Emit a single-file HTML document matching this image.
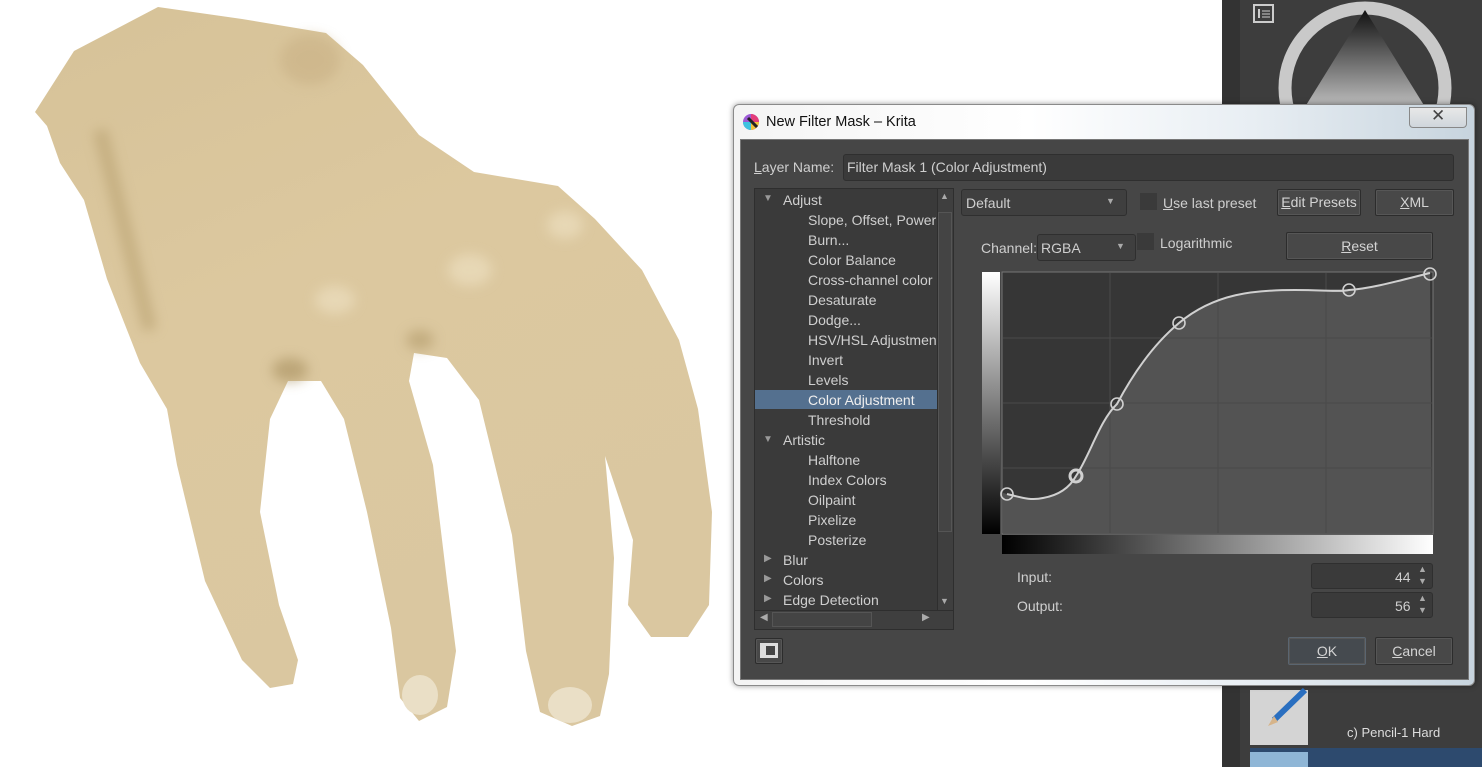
<!DOCTYPE html>
<html><head><meta charset="utf-8"><style>
*{margin:0;padding:0;box-sizing:border-box}
body{width:1482px;height:767px;position:relative;overflow:hidden;background:#fff;font-family:"Liberation Sans","DejaVu Sans",sans-serif;font-size:14px;color:#d4d4d4}
.a{position:absolute}
.t{position:absolute;white-space:nowrap;font-size:14px;color:#cfcfcf}
.btn{position:absolute;background:#484848;border:1px solid #2c2c2c;box-shadow:inset 0 0 0 1px #565656;color:#d4d4d4;text-align:center;font-size:14px;border-radius:2px}
.fld{position:absolute;background:#3a3a3a;border:1px solid #2f2f2f;border-radius:3px}
u{text-decoration:underline}
</style></head><body>
<!-- hand -->
<svg class="a" style="left:0;top:0" width="720" height="767">
<defs>
<linearGradient id="h" x1="0" y1="0" x2="0.4" y2="1"><stop offset="0" stop-color="#d6c298"/><stop offset="0.45" stop-color="#dcc89f"/><stop offset="1" stop-color="#dac7a0"/></linearGradient>
<filter id="bl"><feGaussianBlur stdDeviation="6"/></filter>
</defs>
<path fill="url(#h)" d="M35 112 L74 51 L158 7 L242 19 L326 33 L363 65 L419 135 L474 172 L558 186 L595 219 L642 270 L679 340 L698 409 L712 512 L709 605 L688 637 L651 637 L628 605 L633 540 L605 456 L614 558 L609 674 L600 716 L572 726 L540 712 L526 651 L512 535 L479 400 L447 358 L414 353 L409 381 L433 465 L447 581 L456 651 L447 707 L419 721 L400 698 L391 628 L367 512 L344 419 L321 381 L288 381 L270 419 L260 512 L279 605 L298 660 L293 684 L270 688 L242 660 L205 581 L177 465 L167 409 L140 363 L107 279 L84 200 L60 163 L47 126 Z"/>
<g filter="url(#bl)" opacity="0.6">
<ellipse cx="335" cy="300" rx="20" ry="14" fill="#efe2c4"/>
<ellipse cx="470" cy="270" rx="22" ry="16" fill="#efe2c4"/>
<ellipse cx="565" cy="225" rx="18" ry="14" fill="#efe2c4"/>
<ellipse cx="290" cy="370" rx="18" ry="12" fill="#a8905f"/>
<ellipse cx="420" cy="340" rx="14" ry="10" fill="#b39b6a"/>
<path d="M100 130 L150 330" stroke="#b8a070" stroke-width="14" fill="none"/>
<ellipse cx="310" cy="60" rx="30" ry="25" fill="#c9b185"/>
</g>
<ellipse cx="420" cy="695" rx="18" ry="20" fill="#eadfc6"/>
<ellipse cx="570" cy="705" rx="22" ry="18" fill="#eadfc6"/>
</svg>
<!-- right panel -->
<div class="a" style="left:1222px;top:0;width:260px;height:767px;background:#3d3d3d"></div>
<div class="a" style="left:1222px;top:0;width:18px;height:767px;background:#333"></div>
<svg class="a" style="left:1240px;top:0" width="242" height="767">
<defs><linearGradient id="tr" x1="0" y1="0" x2="0" y2="1"><stop offset="0" stop-color="#111"/><stop offset="1" stop-color="#ccc"/></linearGradient></defs>
<circle cx="125" cy="88" r="80" fill="none" stroke="#c9c9c9" stroke-width="13"/>
<polygon points="125,10 60,115 190,115" fill="url(#tr)"/>
<rect x="14" y="5" width="19" height="17" fill="none" stroke="#ccc" stroke-width="2"/>
<line x1="19" y1="9" x2="19" y2="18" stroke="#ccc" stroke-width="2"/>
<line x1="22" y1="11" x2="30" y2="11" stroke="#ccc"/><line x1="22" y1="14" x2="30" y2="14" stroke="#ccc"/><line x1="22" y1="17" x2="30" y2="17" stroke="#ccc"/>
<rect x="10" y="690" width="58" height="55" fill="#d4d4d4"/>
<line x1="34" y1="720" x2="65" y2="690" stroke="#2a6fc0" stroke-width="6"/>
<polygon points="28,726 34,716 38,722" fill="#d6b48a"/>
<rect x="10" y="748" width="232" height="19" fill="#2d4a6e"/>
<rect x="10" y="752" width="58" height="15" fill="#8fb6d6"/>
<text x="107" y="737" fill="#ddd" font-size="13" font-family="Liberation Sans">c) Pencil-1 Hard</text>
</svg>
<!-- dialog frame -->
<div class="a" style="left:733px;top:104px;width:742px;height:582px;background:linear-gradient(90deg,#f4f4f4,#fff 40%,#e8eef3 70%,#c7d4de);border:1px solid #8a8a8a;border-radius:6px;box-shadow:0 0 6px rgba(0,0,0,.4)"></div>
<div class="a" style="left:1409px;top:107px;width:58px;height:21px;border:1px solid #888;border-radius:0 0 4px 4px;background:linear-gradient(#e8e8e8,#cfd6dc)"></div>
<div class="t" style="left:1431px;top:106px;color:#444;font-size:17px;font-weight:bold">✕</div>
<svg class="a" style="left:742px;top:113px" width="18" height="18"><circle cx="9" cy="9" r="8" fill="#9c5ad6"/><path d="M9 1 A8 8 0 0 1 17 9 L9 9Z" fill="#e33d7a"/><path d="M1 9 A8 8 0 0 0 9 17 L9 9Z" fill="#3fc3e0"/><path d="M9 17 A8 8 0 0 0 17 9 L9 9Z" fill="#f2c23a"/><line x1="6" y1="5" x2="15" y2="14" stroke="#222" stroke-width="3"/></svg>
<div class="t" style="left:766px;top:114px;color:#111;font-size:14.5px">New Filter Mask – Krita</div>
<div class="a" style="left:740px;top:139px;width:729px;height:541px;background:#464646;border:1px solid #777"></div>
<div class="t" style="left:754px;top:159px"><u>L</u>ayer Name:</div>
<div class="fld" style="left:843px;top:154px;width:611px;height:27px"></div>
<div class="t" style="left:847px;top:159px">Filter Mask 1 (Color Adjustment)</div>
<!-- tree -->
<div class="a" style="left:754px;top:188px;width:200px;height:442px;background:#3a3a3a;border:1px solid #2e2e2e"></div>
<div class="a" style="left:755px;top:390px;width:182px;height:19px;background:#54708f"></div>
<div class="a" style="left:937px;top:189px;width:16px;height:421px;background:#3f3f3f;border-left:1px solid #2e2e2e"></div>
<div class="a" style="left:938px;top:212px;width:14px;height:320px;background:#444;border:1px solid #555"></div>
<div class="t" style="left:940px;top:191px;font-size:9px;color:#aaa">▲</div>
<div class="t" style="left:940px;top:596px;font-size:9px;color:#aaa">▼</div>
<div class="a" style="left:755px;top:610px;width:198px;height:19px;background:#3f3f3f;border-top:1px solid #2e2e2e"></div>
<div class="a" style="left:772px;top:612px;width:100px;height:15px;border:1px solid #555;background:#444"></div>
<div class="t" style="left:760px;top:612px;font-size:10px;color:#aaa">◀</div>
<div class="t" style="left:922px;top:612px;font-size:10px;color:#aaa">▶</div>
<div class="t" style="left:763px;top:193px;font-size:10px;color:#999">▼</div>
<div class="t" style="left:783px;top:192px">Adjust</div>
<div class="t" style="left:808px;top:212px;width:128px;overflow:hidden">Slope, Offset, Power</div>
<div class="t" style="left:808px;top:232px">Burn...</div>
<div class="t" style="left:808px;top:252px">Color Balance</div>
<div class="t" style="left:808px;top:272px;width:128px;overflow:hidden">Cross-channel color</div>
<div class="t" style="left:808px;top:292px">Desaturate</div>
<div class="t" style="left:808px;top:312px">Dodge...</div>
<div class="t" style="left:808px;top:332px;width:128px;overflow:hidden">HSV/HSL Adjustment</div>
<div class="t" style="left:808px;top:352px">Invert</div>
<div class="t" style="left:808px;top:372px">Levels</div>
<div class="t" style="left:808px;top:392px;color:#eee">Color Adjustment</div>
<div class="t" style="left:808px;top:412px">Threshold</div>
<div class="t" style="left:763px;top:434px;font-size:10px;color:#999">▼</div>
<div class="t" style="left:783px;top:432px">Artistic</div>
<div class="t" style="left:808px;top:452px">Halftone</div>
<div class="t" style="left:808px;top:472px">Index Colors</div>
<div class="t" style="left:808px;top:492px">Oilpaint</div>
<div class="t" style="left:808px;top:512px">Pixelize</div>
<div class="t" style="left:808px;top:532px">Posterize</div>
<div class="t" style="left:764px;top:553px;font-size:10px;color:#999">▶</div>
<div class="t" style="left:783px;top:552px">Blur</div>
<div class="t" style="left:764px;top:573px;font-size:10px;color:#999">▶</div>
<div class="t" style="left:783px;top:572px">Colors</div>
<div class="t" style="left:764px;top:593px;font-size:10px;color:#999">▶</div>
<div class="t" style="left:783px;top:592px">Edge Detection</div>
<div class="btn" style="left:755px;top:638px;width:28px;height:26px"></div>
<div class="a" style="left:760px;top:643px;width:18px;height:15px;background:#ddd"></div>
<div class="a" style="left:766px;top:646px;width:9px;height:9px;background:#444"></div>
<!-- top controls -->
<div class="fld" style="left:961px;top:189px;width:166px;height:27px;background:#3f3f3f"></div>
<div class="t" style="left:966px;top:195px">Default</div>
<div class="t" style="left:1106px;top:196px;font-size:9px;color:#aaa">▼</div>
<div class="a" style="left:1140px;top:193px;width:17px;height:17px;background:#3a3a3a"></div>
<div class="t" style="left:1163px;top:195px"><u>U</u>se last preset</div>
<div class="btn" style="left:1277px;top:189px;width:84px;height:27px;line-height:25px"><u>E</u>dit Presets</div>
<div class="btn" style="left:1375px;top:189px;width:79px;height:27px;line-height:25px"><u>X</u>ML</div>
<div class="t" style="left:981px;top:240px">Channel:</div>
<div class="fld" style="left:1037px;top:234px;width:99px;height:27px;background:#3f3f3f"></div>
<div class="t" style="left:1041px;top:240px">RGBA</div>
<div class="t" style="left:1116px;top:241px;font-size:9px;color:#aaa">▼</div>
<div class="a" style="left:1137px;top:233px;width:17px;height:17px;background:#3a3a3a"></div>
<div class="t" style="left:1160px;top:235px">Logarithmic</div>
<div class="btn" style="left:1286px;top:232px;width:147px;height:28px;line-height:26px"><u>R</u>eset</div>
<!-- curve -->
<svg class="a" style="left:975px;top:265px" width="470" height="300">
<defs>
<linearGradient id="v" x1="0" y1="0" x2="0" y2="1"><stop offset="0" stop-color="#fff"/><stop offset="1" stop-color="#000"/></linearGradient>
<linearGradient id="hz" x1="0" y1="0" x2="1" y2="0"><stop offset="0" stop-color="#000"/><stop offset="1" stop-color="#fff"/></linearGradient>
</defs>
<rect x="7" y="7" width="18" height="262" fill="url(#v)"/>
<rect x="27" y="7" width="431" height="262" fill="#363636" stroke="#777"/>
<path d="M32 229 C45 232 55 236 68 233 C85 230 95 222 101 211 C115 190 125 155 142 139 C160 105 180 78 204 58 C240 28 280 25 320 25 C350 25 365 27 374 25 C400 23 430 14 455 8 L457 268 L28 268 L28 228 Z" fill="#535353"/>
<g stroke="#4a4a4a" stroke-width="1">
<line x1="135" y1="8" x2="135" y2="268"/><line x1="243" y1="8" x2="243" y2="268"/><line x1="351" y1="8" x2="351" y2="268"/>
<line x1="28" y1="73" x2="457" y2="73"/><line x1="28" y1="138" x2="457" y2="138"/><line x1="28" y1="203" x2="457" y2="203"/>
</g>
<path d="M32 229 C45 232 55 236 68 233 C85 230 95 222 101 211 C115 190 125 155 142 139 C160 105 180 78 204 58 C240 28 280 25 320 25 C350 25 365 27 374 25 C400 23 430 14 455 8" fill="none" stroke="#d0d0d0" stroke-width="2"/>
<g fill="none" stroke="#d0d0d0" stroke-width="1.6">
<circle cx="32" cy="229" r="6"/><circle cx="101" cy="211" r="6" stroke-width="3"/><circle cx="142" cy="139" r="6"/><circle cx="204" cy="58" r="6"/><circle cx="374" cy="25" r="6"/><circle cx="455" cy="9" r="6"/>
</g>
<rect x="27" y="270" width="431" height="19" fill="url(#hz)"/>
</svg>
<div class="t" style="left:1017px;top:569px">Input:</div>
<div class="t" style="left:1017px;top:598px">Output:</div>
<div class="fld" style="left:1311px;top:563px;width:122px;height:26px"></div>
<div class="fld" style="left:1311px;top:592px;width:122px;height:26px"></div>
<div class="t" style="left:1395px;top:569px">44</div>
<div class="t" style="left:1395px;top:598px">56</div>
<div class="t" style="left:1418px;top:563px;font-size:9px;color:#aaa;line-height:12px">▲<br>▼</div>
<div class="t" style="left:1418px;top:592px;font-size:9px;color:#aaa;line-height:12px">▲<br>▼</div>
<div class="btn" style="left:1288px;top:637px;width:78px;height:28px;line-height:26px;background:#454a4f;border-color:#5a6570"><u>O</u>K</div>
<div class="btn" style="left:1375px;top:637px;width:78px;height:28px;line-height:26px"><u>C</u>ancel</div>
</body></html>
